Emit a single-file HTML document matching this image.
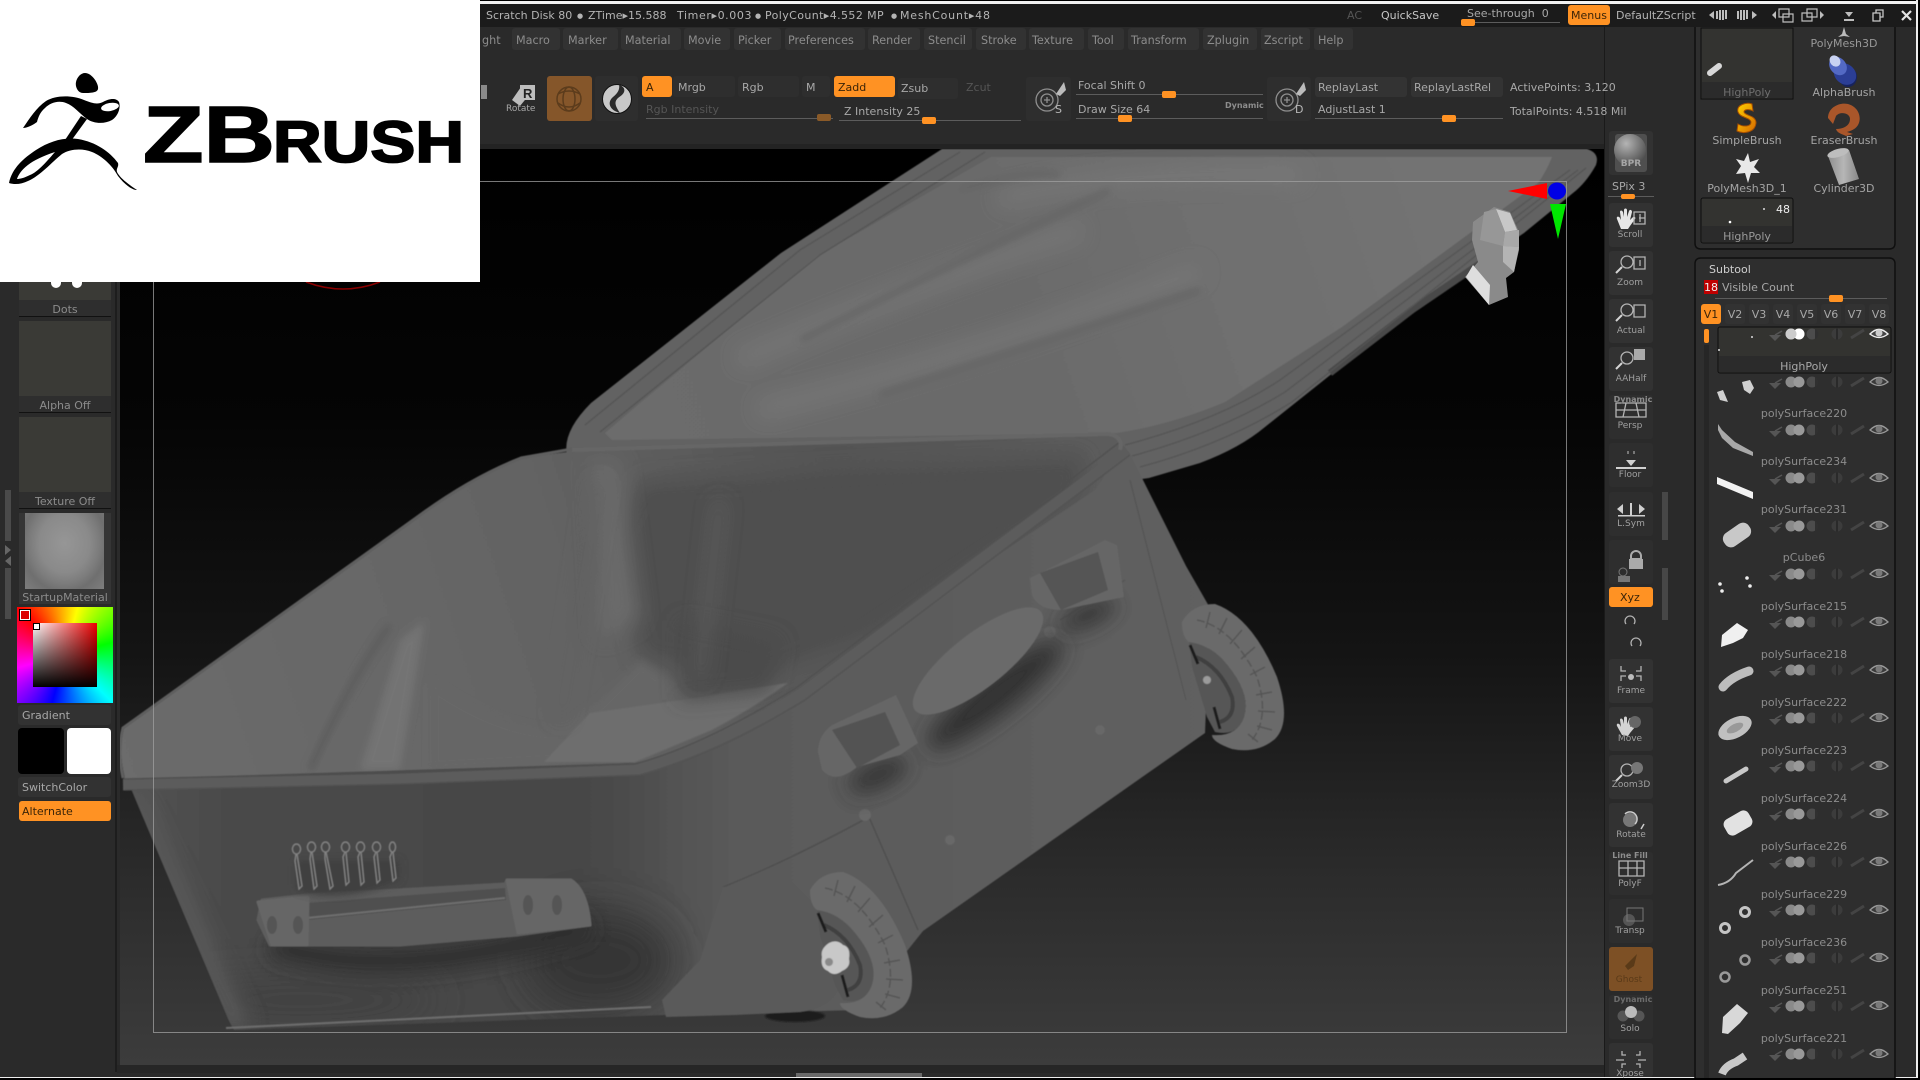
<!DOCTYPE html>
<html><head><meta charset="utf-8"><title>ZBrush</title>
<style>
html,body{margin:0;padding:0;background:#000;width:1920px;height:1080px;overflow:hidden}
#r{position:relative;width:1920px;height:1080px;overflow:hidden;background:#2a2a2a;font-family:"DejaVu Sans","Liberation Sans",sans-serif}
.a,.t,.b,.c{position:absolute}
.t,.c{white-space:nowrap;font-size:11px;line-height:14px;color:#a8a8a8;margin-top:1px;z-index:3}
.c{transform:translateX(-50%)}
.s{font-size:9px;line-height:11px;color:#a0a0a0}
.m{font-size:11.200px}
.l{font-size:11px!important;line-height:12px!important}
.d{color:#8c8c8c}
.dim{color:#555}
.k{color:#3b2408}
.b{background:#323232;border-radius:3px}
.o{background:#ff9223;border-radius:3px}
.sl{position:absolute;height:1px;background:#5c5c5c}
.th{position:absolute;width:14px;height:7px;background:#ff9223;border-radius:2px}
.dy{font-size:8px;line-height:10px;font-weight:bold;color:#8d8d8d}
.dot{font-size:7px}
svg{position:absolute;left:0;top:0}
</style></head><body><div id="r">

<!-- canvas + model -->
<svg width="1920" height="1080" viewBox="0 0 1920 1080">
<defs>
<linearGradient id="cv" x1="0" y1="149" x2="0" y2="1065" gradientUnits="userSpaceOnUse"><stop offset="0" stop-color="#000"/><stop offset=".3" stop-color="#050505"/><stop offset=".55" stop-color="#141414"/><stop offset=".8" stop-color="#2c2c2c"/><stop offset="1" stop-color="#3c3c3c"/></linearGradient>
<linearGradient id="body" x1="120" y1="0" x2="1210" y2="0" gradientUnits="userSpaceOnUse"><stop offset="0" stop-color="#545454"/><stop offset=".1" stop-color="#4a4a4a"/><stop offset=".42" stop-color="#464646"/><stop offset=".56" stop-color="#5a5a5a"/><stop offset="1" stop-color="#606060"/></linearGradient>
<linearGradient id="inner" x1="120" y1="770" x2="1100" y2="450" gradientUnits="userSpaceOnUse"><stop offset="0" stop-color="#6c6c6c"/><stop offset=".45" stop-color="#646464"/><stop offset=".75" stop-color="#545454"/><stop offset="1" stop-color="#5c5c5c"/></linearGradient>
<linearGradient id="lidg" x1="600" y1="430" x2="1400" y2="160" gradientUnits="userSpaceOnUse"><stop offset="0" stop-color="#6c6c6c"/><stop offset=".5" stop-color="#6b6b6b"/><stop offset="1" stop-color="#737373"/></linearGradient>
<filter id="f1" filterUnits="userSpaceOnUse" x="0" y="0" width="1920" height="1080"><feGaussianBlur stdDeviation=".6"/></filter>
<filter id="f4" filterUnits="userSpaceOnUse" x="0" y="0" width="1920" height="1080"><feGaussianBlur stdDeviation="4"/></filter>
<filter id="f10" filterUnits="userSpaceOnUse" x="0" y="0" width="1920" height="1080"><feGaussianBlur stdDeviation="10"/></filter>
<filter id="f20" filterUnits="userSpaceOnUse" x="0" y="0" width="1920" height="1080"><feGaussianBlur stdDeviation="20"/></filter>
<clipPath id="cc"><rect x="120" y="149" width="1484" height="916"/></clipPath>
<clipPath id="ci"><path d="M575 451Q800 442 1100 434Q1122 436 1118 450Q1108 472 1095 490L800 688Q720 745 635 763L125 779Q118 750 123 728L416 518Q470 478 521 458Z"/></clipPath>
<clipPath id="cb"><path d="M123 777L635 763 1121 445 1129 452 1186 566 1210 608 1205 733 923 931 860 1010 665 1015 234 1030 229 1021 129 784Z"/></clipPath>
<g id="wh">
<path d="M817 910Q835 912 850 927Q880 960 872 985Q865 1005 843 1000L835 985 820 935Z" fill="#575757"/>
<path d="M824 925Q848 935 860 965Q864 985 848 990" fill="none" stroke="#3f3f3f" stroke-width="4"/>
<path d="M818 913L826 932M842 975L848 997" stroke="#1d1d1d" stroke-width="3"/>
<path d="M810 890Q820 872 843 872Q880 885 905 945Q920 990 903 1007Q885 1022 860 1017Q840 1010 840 1003Q865 1005 872 985Q880 960 850 927Q835 912 817 910Q810 905 810 890Z" fill="#6b6b6b"/>
<path d="M825 888Q860 895 885 945Q898 985 880 1008" fill="none" stroke="#555" stroke-width="1.500" stroke-dasharray="8 3"/>
<path d="M838 880l-4 16M855 886l-8 16M870 898l-12 14M883 915l-14 12M893 935l-15 8M900 960l-16 3M903 980l-17-1M900 998l-15-4M886 1010l-10-8" stroke="#545454" stroke-width="1.500"/>
</g>
</defs>
<g clip-path="url(#cc)">
<rect x="120" y="149" width="1484" height="916" fill="url(#cv)"/>
<path d="M306 282Q343 296 380 282" fill="none" stroke="#8a0000" stroke-width="1.500"/>
<g filter="url(#f1)">
<!-- lid -->
<path d="M942 149L1587 149Q1600 153 1596 165Q1586 183 1573 193L1524 233 1412 310 1265 427Q1240 448 1200 463L1149 478 1135 480 1121 455 600 458 567 455Q562 432 591 403L781 253Z" fill="#626262"/>
<path d="M1500 250L1412 310 1330 373" fill="none" stroke="#494949" stroke-width="7"/>
<path d="M991 157L1552 157Q1546 172 1538 183L1342 327 1225 402Q1170 425 1117 433L612 440 605 433 640 403 816 257Z" fill="url(#lidg)"/>
<g filter="url(#f10)" fill="none" stroke="#787878" stroke-width="14">
<path d="M740 360Q900 290 1080 230"/><path d="M760 410Q960 360 1200 270"/><path d="M1000 200Q1100 170 1300 175"/>
</g>
<g filter="url(#f4)" fill="none" stroke="#5f5f5f" stroke-width="4">
<path d="M800 340Q960 260 1110 190"/><path d="M880 395Q1050 340 1200 290"/><path d="M960 190Q1020 170 1060 175"/>
</g>
<g fill="none" stroke="#555" stroke-width="1.300">
<path d="M1125 445Q1220 420 1280 380L1570 170"/><path d="M1132 456Q1220 432 1285 392L1578 170"/><path d="M1140 467Q1225 444 1292 402L1586 168"/>
<path d="M585 425L800 250 960 152"/><path d="M600 432L820 255 985 152"/>
</g>
<!-- box body -->
<path d="M123 777L635 763 1121 445 1129 452 1186 566 1210 608 1205 733 923 931 860 1010 665 1015 234 1030 229 1021 129 784Z" fill="url(#body)"/>
<g clip-path="url(#cb)">
<ellipse cx="600" cy="960" rx="75" ry="50" fill="#363636" filter="url(#f20)"/>
<ellipse cx="300" cy="1000" rx="140" ry="20" fill="#404040" filter="url(#f20)"/>
<path d="M130 800L240 1030" stroke="#585858" stroke-width="24" filter="url(#f10)"/>
</g>
<!-- interior -->
<path d="M575 451Q800 442 1100 434Q1122 436 1118 450Q1108 472 1095 490L800 688Q720 745 635 763L125 779Q118 750 123 728L416 518Q470 478 521 458Z" fill="url(#inner)"/>
<g clip-path="url(#ci)">
<path d="M640 480L1085 455 1080 495 860 640 760 680 640 660 610 540Z" fill="#4f4f4f" filter="url(#f10)"/>
<path d="M590 460L620 460 640 620 600 640Z" fill="#6a6a6a" filter="url(#f10)"/>
<path d="M400 640L425 620 400 770 360 770Z" fill="#737373" filter="url(#f4)"/>
<path d="M310 770Q350 680 390 625" stroke="#5c5c5c" stroke-width="6" fill="none" filter="url(#f4)"/>
<path d="M430 680Q500 730 560 730L600 700 640 660 700 700 620 760 430 770Z" fill="#666" filter="url(#f4)"/>
<path d="M544 762L590 713 681 700Q740 690 788 683Q750 710 712 730L635 762Z" fill="#6e6e6e" filter="url(#f1)"/>
<path d="M680 620L780 640 770 690 680 700Z" fill="#4c4c4c" filter="url(#f10)"/>
<path d="M600 480L560 720M720 500L700 680" stroke="#5e5e5e" stroke-width="8" filter="url(#f10)"/>
</g>
<path d="M123 785L400 779 635 770Q710 750 800 695L1127 450" fill="none" stroke="#5b5b5b" stroke-width="11"/>
<path d="M123 779L400 772 635 764Q705 745 796 688L1120 442" fill="none" stroke="#505050" stroke-width="1.300"/>
<path d="M125 790L400 784 640 775Q712 757 805 700L1130 455" fill="none" stroke="#525252" stroke-width="1.300"/>
<path d="M572 450L1108 434Q1124 436 1120 450" fill="none" stroke="#666" stroke-width="4"/>
<path d="M572 449L521 458Q470 478 416 518L123 728Q117 752 123 778" fill="none" stroke="#5e5e5e" stroke-width="3"/>
<path d="M226 1028L651 1007" stroke="#6d6d6d" stroke-width="2"/>
<!-- panel seams -->
<path d="M869 817L918 930M723 887Q790 860 869 817" fill="none" stroke="#4e4e4e" stroke-width="1.300"/>
<path d="M1130 480L1186 700M1125 580L1060 620" fill="none" stroke="#555" stroke-width="1.300"/>
<g fill="#676767"><circle cx="1100" cy="730" r="5"/><circle cx="950" cy="840" r="5"/><circle cx="738" cy="895" r="6"/><circle cx="865" cy="815" r="6"/><circle cx="1050" cy="632" r="6"/></g>
<!-- top handle -->
<ellipse cx="995" cy="695" rx="85" ry="20" fill="#303030" transform="rotate(-38 995 695)" filter="url(#f10)"/>
<ellipse cx="878" cy="775" rx="32" ry="12" fill="#333" filter="url(#f10)" transform="rotate(-25 878 775)"/>
<ellipse cx="1088" cy="615" rx="30" ry="10" fill="#333" filter="url(#f10)" transform="rotate(-25 1088 615)"/>
<ellipse cx="978" cy="661" rx="80" ry="27" fill="#6a6a6a" transform="rotate(-38 978 661)"/>
<path d="M818 752Q818 735 832 725L896 695 918 743 900 755 857 767Q835 785 822 770Z" fill="#666"/><path d="M832 730L885 712 900 745 857 768Z" fill="#535353"/>
<path d="M1030 578L1105 540 1117 545 1124 597 1061 610Q1038 610 1032 595Z" fill="#666"/><path d="M1040 573L1098 552 1108 590 1061 610Z" fill="#555"/>
<!-- front handle -->
<path d="M270 945Q400 985 590 925" fill="none" stroke="#2e2e2e" stroke-width="24" filter="url(#f10)"/>
<path d="M262 900L307 895 505 884 507 880 570 880Q586 890 590 925L517 935 400 945 306 945 270 945 258 920Z" fill="#5d5d5d" stroke="#5d5d5d" stroke-width="3" stroke-linejoin="round"/>
<path d="M307 903L505 888 506 900 307 920Z" fill="#505050"/>
<path d="M307 918L505 898" stroke="#6e6e6e" stroke-width="2"/>
<path d="M507 880L571 880Q587 890 590 925L518 933Z" fill="#666" stroke="#666" stroke-width="3" stroke-linejoin="round"/><path d="M258 902L308 897 307 945 272 945Z" fill="#666" stroke="#666" stroke-width="3" stroke-linejoin="round"/>
<g fill="#555"><ellipse cx="272" cy="925" rx="5" ry="9"/><ellipse cx="298" cy="925" rx="5" ry="9"/><ellipse cx="528" cy="905" rx="5" ry="10"/><ellipse cx="557" cy="905" rx="5" ry="10"/></g>
<path d="M295 890Q340 905 400 880V860L295 860Z" fill="#3f3f3f" filter="url(#f4)"/>
<g fill="none" stroke="#838383" stroke-width="1.300">
<path d="M296 854a4 5 0 1 1 1 0l5 32-3 3-4-28zM311 852a4 5 0 1 1 1 0l5 34-3 3-4-30zM325 852a4 5 0 1 1 1 0l7 34-3 3-5-30zM345 852a4 5 0 1 1 1 0l3 30-3 3-3-28zM360 852a4 5 0 1 1 1 0l3 30-3 3-3-28zM376 852a4 5 0 1 1 1 0l3 28-3 3-3-26zM392 852a3 5 0 1 1 1 0l3 26-3 3-3-24z"/>
</g>
<!-- upper wheel -->
<use href="#wh" transform="translate(372 -268)"/>
<circle cx="1207" cy="680" r="4" fill="#b8b8b8" opacity=".7"/>
<!-- lower corner + wheel -->
<ellipse cx="795" cy="1016" rx="30" ry="6" fill="#1f1f1f" filter="url(#f1)"/>
<path d="M662 1000L666 1017 735 1015 800 1012Q830 1008 838 990L826 945 815 905 790 880 723 887 700 960Z" fill="#5a5a5a"/>
<use href="#wh"/>
<path d="M829 943q8-4 14 2q8 2 6 14q2 8-7 12q-8 6-14 0q-8-3-6-14q-2-8 7-14z" fill="#c8c8c8"/><circle cx="829" cy="962" r="4" fill="#8a8a8a"/>
</g>
<!-- doc frame -->
<rect x="153.500" y="181.500" width="1413" height="851" fill="none" stroke="#a0a0a0" stroke-opacity=".75"/>
<!-- head -->
<path d="M1494 207L1510 212 1519 232 1519 250 1514 272 1506 278 1508 297 1489 305 1465 277 1478 262 1472 240 1473 222Z" fill="#8a8a8a"/>
<path d="M1496 209L1510 213 1517 230 1505 232Z" fill="#c8c8c8"/><path d="M1505 232L1519 230 1519 247 1503 246Z" fill="#a8a8a8"/><path d="M1503 246L1519 247 1514 272 1503 262Z" fill="#b4b4b4"/>
<path d="M1484 212L1496 209 1505 232 1503 246 1480 240Z" fill="#979797"/>
<path d="M1466 277L1489 305 1490 285 1473 265Z" fill="#dedede"/>
<!-- gizmo -->
<path d="M1508 191L1547 183 1547 199Z" fill="#f00"/>
<ellipse cx="1557" cy="191" rx="9" ry="8.500" fill="#0000e6"/>
<path d="M1550 204L1566 204 1558 239Z" fill="#00e600"/>
</g>
</svg>

<!-- dock frames -->
<div class="a" style="left:115px;top:282px;width:2px;height:790px;background:#1d1d1d"></div>
<div class="a" style="left:117px;top:1065px;width:1487px;height:8px;background:#262626"></div>
<div class="a" style="left:0;top:1073px;width:1916px;height:4px;background:#2a2a2a"></div>
<div class="a" style="left:796px;top:1073px;width:126px;height:4px;background:#6a6a6a"></div>
<div class="a" style="left:0;top:1077px;width:1918px;height:1px;background:#eee"></div>
<div class="a" style="left:0;top:1078px;width:1920px;height:2px;background:#000"></div>

<!-- top bars -->
<div class="a" style="left:480px;top:0;width:1440px;height:1px;background:#000"></div>
<div class="a" style="left:480px;top:1px;width:1438px;height:3px;background:#f2f2f2"></div>
<div class="a" style="left:480px;top:4px;width:1436px;height:23px;background:#1b1b1b"></div>
<div class="a" style="left:480px;top:27px;width:1124px;height:117px;background:#2a2a2a"></div>
<div class="a" style="left:480px;top:144px;width:1124px;height:5px;background:#232323"></div>
<div class="a" style="left:1604px;top:27px;width:312px;height:1050px;background:#2a2a2a;border-left:1px solid #1a1a1a;box-sizing:border-box"></div>
<div class="a" style="left:1916px;top:0;width:2px;height:1078px;background:#eee"></div>
<div class="a" style="left:1918px;top:0;width:2px;height:1080px;background:#000"></div>

<div class="t" style="left:486px;top:8px;color:#b4b4b4">Scratch Disk 80</div>
<div class="t dot" style="left:577px;top:8px;color:#b4b4b4">●</div>
<div class="t" style="left:588px;top:8px;color:#b4b4b4">ZTime▸15.588</div>
<div class="t" style="left:677px;top:8px;color:#b4b4b4;letter-spacing:.6px">Timer▸0.003</div>
<div class="t dot" style="left:755px;top:8px;color:#b4b4b4">●</div>
<div class="t" style="left:765px;top:8px;color:#b4b4b4;letter-spacing:.4px">PolyCount▸4.552 MP</div>
<div class="t dot" style="left:891px;top:8px;color:#b4b4b4">●</div>
<div class="t" style="left:900px;top:8px;color:#b4b4b4;letter-spacing:.8px">MeshCount▸48</div>
<div class="t dim" style="left:1347px;top:8px">AC</div>
<div class="t" style="left:1381px;top:8px;color:#c8c8c8">QuickSave</div>
<div class="t" style="left:1467px;top:6px">See-through&nbsp;&nbsp;0</div>
<div class="sl" style="left:1462px;top:22px;width:98px"></div><div class="th" style="left:1461px;top:19px"></div>
<div class="a o" style="left:1568px;top:5px;width:42px;height:20px"></div>
<div class="t k" style="left:1571px;top:8px">Menus</div>
<div class="t" style="left:1616px;top:8px;color:#b4b4b4">DefaultZScript</div>
<svg width="1920" height="30" viewBox="0 0 1920 30" fill="#bdbdbd">
<path d="M1709 15l5-4v8zM1716 11h2v8h-2zM1719 10h2v10h-2zM1722 10h2v10h-2zM1725 10h2v9h-2zM1737 11h2v8h-2zM1740 10h2v10h-2zM1743 10h2v10h-2zM1746 10h2v9h-2zM1752 11l5 4-5 4zM1772 15l4-4v8z"/>
<g fill="none" stroke="#bdbdbd" stroke-width="1.200"><path d="M1779 9h10v8h-10zM1783 14h10v8h-10zM1802 13h10v8h-10zM1807 9h10v8h-10z"/></g>
<path d="M1820 11l4 4-4 4zM1845 12h8l-4 5zM1844 19h10v2h-10z"/>
<g fill="none" stroke="#c8c8c8" stroke-width="1.300"><path d="M1873 13h7v8h-7zM1876 13v-3h7v7h-3"/></g>
<path d="M1902 11l9 9M1911 11l-9 9" stroke="#e4e4e4" stroke-width="2.200" fill="none"/>
</svg>

<!-- menu row -->
<div class="b" style="left:512px;top:28px;width:48px;height:22px"></div><div class="b" style="left:563px;top:28px;width:55px;height:22px"></div><div class="b" style="left:621px;top:28px;width:60px;height:22px"></div><div class="b" style="left:684px;top:28px;width:46px;height:22px"></div><div class="b" style="left:734px;top:28px;width:47px;height:22px"></div><div class="b" style="left:785px;top:28px;width:80px;height:22px"></div><div class="b" style="left:868px;top:28px;width:52px;height:22px"></div><div class="b" style="left:924px;top:28px;width:48px;height:22px"></div><div class="b" style="left:976px;top:28px;width:50px;height:22px"></div><div class="b" style="left:1029px;top:28px;width:55px;height:22px"></div><div class="b" style="left:1088px;top:28px;width:36px;height:22px"></div><div class="b" style="left:1128px;top:28px;width:71px;height:22px"></div><div class="b" style="left:1203px;top:28px;width:54px;height:22px"></div><div class="b" style="left:1261px;top:28px;width:49px;height:22px"></div><div class="b" style="left:1314px;top:28px;width:39px;height:22px"></div>
<div class="t d m" style="left:482px;top:33px">ght</div><div class="t d m" style="left:516px;top:33px">Macro</div><div class="t d m" style="left:568px;top:33px">Marker</div><div class="t d m" style="left:625px;top:33px">Material</div><div class="t d m" style="left:688px;top:33px">Movie</div><div class="t d m" style="left:738px;top:33px">Picker</div><div class="t d m" style="left:788px;top:33px">Preferences</div><div class="t d m" style="left:872px;top:33px">Render</div><div class="t d m" style="left:928px;top:33px">Stencil</div><div class="t d m" style="left:981px;top:33px">Stroke</div><div class="t d m" style="left:1032px;top:33px">Texture</div><div class="t d m" style="left:1092px;top:33px">Tool</div><div class="t d m" style="left:1131px;top:33px">Transform</div><div class="t d m" style="left:1207px;top:33px">Zplugin</div><div class="t d m" style="left:1264px;top:33px">Zscript</div><div class="t d m" style="left:1318px;top:33px">Help</div>

<!-- toolbar -->
<div class="t s" style="left:506px;top:103px;color:#a8a8a8">Rotate</div>
<div class="a" style="left:481px;top:85px;width:6px;height:14px;background:#8a8a8a"></div>
<div class="b" style="left:547px;top:76px;width:45px;height:45px;background:#85562a"></div>
<div class="b" style="left:595px;top:76px;width:43px;height:45px;background:#2e2e2e"></div>
<div class="a o" style="left:642px;top:76px;width:30px;height:21px"></div><div class="t k" style="left:646px;top:80px">A</div>
<div class="b" style="left:673px;top:76px;width:62px;height:21px;background:#2e2e2e"></div><div class="b" style="left:738px;top:76px;width:61px;height:21px;background:#2e2e2e"></div><div class="b" style="left:802px;top:76px;width:28px;height:21px;background:#2e2e2e"></div>
<div class="t" style="left:678px;top:80px">Mrgb</div><div class="t" style="left:742px;top:80px">Rgb</div><div class="t" style="left:806px;top:80px">M</div>
<div class="a o" style="left:834px;top:76px;width:61px;height:21px"></div><div class="t k" style="left:838px;top:80px">Zadd</div>
<div class="b" style="left:898px;top:78px;width:60px;height:21px;background:#2e2e2e"></div><div class="t" style="left:901px;top:81px">Zsub</div>
<div class="t dim" style="left:966px;top:80px">Zcut</div>
<div class="t dim" style="left:646px;top:102px">Rgb Intensity</div>
<div class="sl" style="left:646px;top:118px;width:187px"></div><div class="th" style="left:817px;top:114px;background:#8a5a28"></div>
<div class="t" style="left:844px;top:104px">Z Intensity 25</div>
<div class="sl" style="left:839px;top:120px;width:182px"></div><div class="th" style="left:922px;top:117px"></div>
<div class="b" style="left:1026px;top:77px;width:45px;height:44px;background:#2e2e2e"></div>
<div class="t" style="left:1078px;top:78px">Focal Shift 0</div>
<div class="sl" style="left:1076px;top:94px;width:187px"></div><div class="th" style="left:1162px;top:91px"></div>
<div class="t" style="left:1078px;top:102px">Draw Size 64</div>
<div class="sl" style="left:1076px;top:118px;width:187px"></div><div class="th" style="left:1118px;top:115px"></div>
<div class="t dy" style="left:1225px;top:100px">Dynamic</div>
<div class="b" style="left:1267px;top:77px;width:44px;height:44px;background:#2e2e2e"></div>
<div class="b" style="left:1315px;top:77px;width:92px;height:20px;background:#333"></div><div class="b" style="left:1411px;top:77px;width:92px;height:20px;background:#333"></div>
<div class="t" style="left:1318px;top:80px">ReplayLast</div><div class="t" style="left:1414px;top:80px">ReplayLastRel</div>
<div class="t" style="left:1318px;top:102px">AdjustLast 1</div>
<div class="sl" style="left:1315px;top:118px;width:188px"></div><div class="th" style="left:1442px;top:115px"></div>
<div class="t" style="left:1510px;top:80px">ActivePoints: 3,120</div>
<div class="t" style="left:1510px;top:104px">TotalPoints: 4.518 Mil</div>
<svg width="1920" height="130" viewBox="0 0 1920 130">
<path d="M512 100l9-13 8 8-9 11zM520 85h15v15h-15z" fill="#bdbdbd"/><text x="523" y="98" font-family="Liberation Sans" font-size="13" font-weight="bold" fill="#222">R</text>
<g fill="none" stroke="#5c3c1c" stroke-width="1.500"><circle cx="569" cy="99" r="12"/><ellipse cx="569" cy="99" rx="6" ry="12"/><path d="M558 103q11 8 22 0M558 94q11-6 22 0"/></g>
<circle cx="617" cy="99" r="14.500" fill="#c8c8c8" stroke="#111" stroke-width="1"/><path d="M617 84.500c7 3 7 8 1 12-6 4-6 8 0 16.500 -11-3-13-11-7-16 5-4 7-8 6-12.500z" fill="#2a2a2a" transform="translate(2 0)"/>
<g fill="none" stroke="#8f8f8f" stroke-width="1.300"><circle cx="1047" cy="100" r="11"/><circle cx="1047" cy="100" r="6"/><path d="M1047 97v6M1044 100h6"/><circle cx="1287" cy="100" r="11"/><circle cx="1287" cy="100" r="6"/><path d="M1287 97v6M1284 100h6"/></g>
<path d="M1056 94l8-12 2 8-6 6zM1296 94l8-12 2 8-6 6z" fill="#bbb"/>
<text x="1055" y="113" font-family="DejaVu Sans" font-size="11" fill="#b8b8b8">S</text><text x="1295" y="113" font-family="DejaVu Sans" font-size="11" fill="#b8b8b8">D</text>
</svg>

<!-- logo -->
<div class="a" style="left:0;top:0;width:480px;height:282px;background:#fff"></div>
<svg width="480" height="282" viewBox="0 0 480 282">
<path d="M85 73C92 73 99 84 98 89 97 93 90 93 83 93 78 93 75 87 76 82 77 77 81 73 85 73Z"/>
<path d="M23 128C30 118 36 108 46 101 56 95 72 95 84 100 92 103 97 105 103 102 108 99 116 97 119 102 121 108 118 116 112 120 105 124 94 124 87 119 79 113 74 106 66 103 58 100 50 103 45 108 40 112 38 118 37 122 33 125 27 128 23 128Z"/>
<ellipse cx="110" cy="107" rx="9" ry="4" fill="#fff" transform="rotate(-10 110 107)"/>
<path d="M81 116L87 119 71 141 65 140Z"/>
<path d="M137 190C128 184 120 178 117 172 116 168 119 167 118 163 110 152 96 142 78 139 64 137 50 141 36 150 24 158 12 168 9 183 15 185 22 184 28 181 40 176 52 162 62 154 70 149 82 148 92 152 102 156 112 165 118 176 124 184 132 190 137 190Z"/>
<path d="M17 179C20 170 30 160 55 152 48 160 38 172 30 175 24 178 20 179 17 179Z" fill="#fff"/>
<text x="143" y="162" font-family="Liberation Sans" font-size="80" font-weight="bold" stroke="#000" stroke-width="1.500" textLength="132" lengthAdjust="spacingAndGlyphs">ZB</text>
<text x="273" y="162" font-family="Liberation Sans" font-size="58" font-weight="bold" stroke="#000" stroke-width="1.800" textLength="191" lengthAdjust="spacingAndGlyphs">RUSH</text>
</svg>

<!-- left dock -->
<div class="a" style="left:5px;top:490px;width:6px;height:51px;background:#4a4a4a"></div>
<div class="a" style="left:5px;top:568px;width:6px;height:51px;background:#4a4a4a"></div>
<svg width="20" height="600" viewBox="0 0 20 600"><path d="M5 545l6 5-6 5zM11 556l-6 5 6 5z" fill="#666"/></svg>
<div class="a" style="left:19px;top:282px;width:92px;height:34px;background:#3a3a36;border-bottom:1px solid #111"></div>
<div class="a" style="left:19px;top:300px;width:92px;height:16px;background:#2e2e2e"></div>
<div class="a" style="left:51px;top:282px;width:10px;height:6px;background:#fff;border-radius:0 0 5px 5px"></div><div class="a" style="left:72px;top:282px;width:10px;height:6px;background:#fff;border-radius:0 0 5px 5px"></div>
<div class="c d l" style="left:65px;top:303px">Dots</div>
<div class="a" style="left:19px;top:321px;width:92px;height:92px;background:#3a3a36;border-bottom:1px solid #111;box-sizing:border-box"></div>
<div class="a" style="left:19px;top:396px;width:92px;height:16px;background:#2e2e2e"></div>
<div class="c d l" style="left:65px;top:399px">Alpha Off</div>
<div class="a" style="left:19px;top:417px;width:92px;height:92px;background:#3a3a36;border-bottom:1px solid #111;box-sizing:border-box"></div>
<div class="a" style="left:19px;top:492px;width:92px;height:16px;background:#2e2e2e"></div>
<div class="c d l" style="left:65px;top:495px">Texture Off</div>
<div class="a" style="left:19px;top:513px;width:92px;height:91px;background:#353535"></div>
<div class="a" style="left:25px;top:513px;width:79px;height:76px;background:radial-gradient(ellipse at 50% 40%,#969696 0,#8a8a8a 45%,#7c7c7c 62%,#6f6f6f 75%,#7e7e7e 100%)"></div>
<div class="c d l" style="left:65px;top:591px">StartupMaterial</div>
<div class="a" style="left:17px;top:607px;width:96px;height:96px;background:conic-gradient(from -45deg,#f00,#ff0 60deg,#0f0 120deg,#0ff 180deg,#00f 240deg,#f0f 300deg,#f00)"></div>
<div class="a" style="left:33px;top:623px;width:64px;height:64px;background:linear-gradient(to bottom,rgba(0,0,0,0),#000),linear-gradient(to right,#fff,#e00)"></div>
<div class="a" style="left:20px;top:610px;width:8px;height:8px;background:#d00;border:1px solid #fff;outline:1px solid #000"></div>
<div class="a" style="left:33px;top:623px;width:5px;height:5px;background:#fff;border:1px solid #000"></div>
<div class="b" style="left:18px;top:705px;width:93px;height:20px"></div><div class="t" style="left:22px;top:708px">Gradient</div>
<div class="a" style="left:18px;top:728px;width:46px;height:46px;background:#000;border-radius:4px"></div>
<div class="a" style="left:67px;top:728px;width:44px;height:46px;background:#fff;border-radius:4px"></div>
<div class="b" style="left:18px;top:777px;width:93px;height:20px"></div><div class="t" style="left:22px;top:780px">SwitchColor</div>
<div class="a o" style="left:19px;top:801px;width:92px;height:20px"></div><div class="t k" style="left:22px;top:804px">Alternate</div>

<!-- right dock -->
<div class="b" style="left:1609px;top:131px;width:44px;height:44px"></div>
<div class="t" style="left:1612px;top:179px">SPix 3</div><div class="sl" style="left:1608px;top:196px;width:46px"></div><div class="th" style="left:1621px;top:194px;height:5px"></div>
<div class="b" style="left:1609px;top:203px;width:44px;height:44px"></div><div class="b" style="left:1609px;top:251px;width:44px;height:44px"></div><div class="b" style="left:1609px;top:299px;width:44px;height:44px"></div><div class="b" style="left:1609px;top:347px;width:44px;height:44px"></div>
<div class="b" style="left:1609px;top:395px;width:44px;height:44px;background:#2e2e2e"></div><div class="b" style="left:1609px;top:443px;width:44px;height:44px;background:#2e2e2e"></div><div class="b" style="left:1609px;top:492px;width:44px;height:44px;background:#2e2e2e"></div><div class="b" style="left:1609px;top:540px;width:44px;height:44px;background:#2e2e2e"></div>
<div class="a o" style="left:1609px;top:587px;width:44px;height:20px"></div>
<div class="t k" style="left:1620px;top:590px">Xyz</div>
<div class="b" style="left:1609px;top:659px;width:44px;height:44px"></div><div class="b" style="left:1609px;top:707px;width:44px;height:44px"></div><div class="b" style="left:1609px;top:755px;width:44px;height:44px"></div><div class="b" style="left:1609px;top:803px;width:44px;height:44px"></div>
<div class="b" style="left:1609px;top:852px;width:44px;height:43px;background:#2e2e2e"></div><div class="b" style="left:1609px;top:899px;width:44px;height:44px;background:#2e2e2e"></div>
<div class="b" style="left:1609px;top:947px;width:44px;height:44px;background:#7d5025"></div>
<div class="b" style="left:1609px;top:995px;width:44px;height:44px;background:#2e2e2e"></div><div class="b" style="left:1609px;top:1043px;width:44px;height:34px"></div>
<div class="c s" style="left:1631px;top:158px;font-weight:bold;font-size:9px;color:#a6a6a6">BPR</div>
<div class="c s" style="left:1630px;top:229px">Scroll</div><div class="c s" style="left:1630px;top:277px">Zoom</div><div class="c s" style="left:1631px;top:325px">Actual</div><div class="c s" style="left:1631px;top:373px">AAHalf</div>
<div class="c dy" style="left:1633px;top:394px">Dynamic</div><div class="c s" style="left:1630px;top:420px">Persp</div>
<div class="c s" style="left:1630px;top:469px">Floor</div><div class="c s" style="left:1631px;top:518px">L.Sym</div>
<div class="c s" style="left:1631px;top:685px">Frame</div><div class="c s" style="left:1630px;top:733px">Move</div><div class="c s" style="left:1631px;top:779px">Zoom3D</div><div class="c s" style="left:1631px;top:829px">Rotate</div>
<div class="c dy" style="left:1630px;top:850px">Line Fill</div><div class="c s" style="left:1630px;top:878px">PolyF</div>
<div class="c s" style="left:1630px;top:925px">Transp</div><div class="c s" style="left:1629px;top:974px;color:#5a3a18">Ghost</div>
<div class="c dy" style="left:1633px;top:994px;color:#6c6c6c">Dynamic</div><div class="c s" style="left:1630px;top:1023px">Solo</div>
<div class="c s" style="left:1630px;top:1068px">Xpose</div>
<div class="a" style="left:1662px;top:492px;width:6px;height:48px;background:#474747"></div><div class="a" style="left:1662px;top:568px;width:6px;height:52px;background:#474747"></div>

<svg width="1920" height="1080" viewBox="0 0 1920 1080">
<defs>
<radialGradient id="sp" cx=".38" cy=".3" r=".75"><stop offset="0" stop-color="#b4b4b4"/><stop offset="1" stop-color="#4a4a4a"/></radialGradient>
<linearGradient id="cyl" x1="0" x2="1"><stop offset="0" stop-color="#8e8e8e"/><stop offset=".5" stop-color="#b6b6b6"/><stop offset="1" stop-color="#888"/></linearGradient>
<linearGradient id="sb" x1="0" y1="0" x2="1" y2="1"><stop offset="0" stop-color="#ffd000"/><stop offset="1" stop-color="#d76a00"/></linearGradient>
<g id="ri">
<path d="M1769 1h12l-6 6z" fill="#555"/><path d="M1775 1l7-4" stroke="#555" stroke-width="1.500"/>
<circle cx="1791" cy="0" r="5.500" fill="#8a8a8a"/><circle cx="1799" cy="0" r="5.500" fill="#999"/>
<circle cx="1812" cy="0" r="5.500" fill="#4c4c4c"/><path d="M1815 -5a5.500 5.500 0 0 1 0 10z" fill="#303030"/>
<circle cx="1837" cy="0" r="5.500" fill="#3c3c3c"/><path d="M1837 -5.500v11" stroke="#2a2a2a" stroke-width="2"/>
<path d="M1851 4L1864 -4" stroke="#444" stroke-width="3"/>
<path d="M1870 0q9-9 18 0q-9 7-18 0z" fill="#3a3a3a" stroke="#999" stroke-width="1.300"/><circle cx="1879" cy="-1" r="3.500" fill="#7a7a7a"/>
</g>
</defs>
<!-- dock icons -->
<rect x="1615" y="134" width="32" height="38" rx="3" fill="#4f4f4f"/>
<circle cx="1630" cy="150" r="16" fill="url(#sp)"/>
<g fill="#e6e6e6">
<path d="M1621 229l-4-10c-1-3 2-3 3-1l1 2-1-8c0-2 2-2 3 0l1 5 0-7c0-2 3-2 3 0l0 7 2-6c1-2 3-1 3 1l-2 8 3-3c2-1 3 1 2 2l-5 7-2 3z"/>
</g>
<g fill="#d4d4d4"><path d="M1622 735l-5-9c-1-3 2-3 3-1l1 2-1-7c0-2 2-2 3 0l1 4 0-6c0-2 3-2 3 0l0 6 2-5c1-2 3-1 3 1l-2 7 3-2c2-1 3 1 2 2l-5 6-2 3z"/></g>
<g fill="none" stroke="#b4b4b4" stroke-width="1.300">
<path d="M1634 212h11v12h-11zM1639 218h6M1640 214v8"/>
<circle cx="1627" cy="262" r="6"/><path d="M1634 257h11v12h-11zM1640 260v6"/>
<circle cx="1627" cy="310" r="6"/><path d="M1634 305h11v12h-11z"/>
<circle cx="1627" cy="358" r="6"/>
<path d="M1616 403h30v14h-30zM1616 410h30M1626 403l-3 14M1636 403l3 14"/>
<path d="M1621 666v5h5M1641 666v5h-5M1621 681v-5h5M1641 681v-5h-5"/>
<circle cx="1627" cy="770" r="6"/>
<path d="M1619 861h25v15h-25zM1619 868h25M1628 861v15M1637 861v15"/>
<path d="M1626 624a5 5 0 1 1 8 0M1632 646a5 5 0 1 1 8 0"/>
<path d="M1622 1051v4h4M1640 1051v4h-4M1622 1068v-4h4M1640 1068v-4h-4M1616 1060h8M1638 1060h8"/>
</g>
<path d="M1622 267l-6 6M1622 315l-6 6M1622 363l-6 6M1622 775l-6 6" stroke="#d4d4d4" stroke-width="2"/>
<path d="M1634 349h11v11h-11z" fill="#aaa"/>
<path d="M1616 467h30v2h-30zM1626 460h10l-5 6z" fill="#d0d0d0"/><path d="M1627 451h2v3h-2zM1633 451h2v3h-2z" fill="#777"/>
<path d="M1617 509l6-5v10zM1645 509l-6-5v10zM1630 503h2v12h-2zM1618 515h27v1.500h-27z" fill="#d0d0d0"/>
<circle cx="1631" cy="677" r="3" fill="#bbb"/><circle cx="1635" cy="722" r="6" fill="#666"/>
<circle cx="1637" cy="768" r="6" fill="#777"/><circle cx="1630" cy="820" r="7" fill="#777"/>
<path d="M1625 814a7 7 0 1 1 10 10M1644 824l-3 5" fill="none" stroke="#ccc" stroke-width="1.500"/>
<circle cx="1629" cy="920" r="6" fill="#555"/><path d="M1627 908h16v13h-16z" fill="none" stroke="#777"/>
<path d="M1625 966l12-12-3 12-6 4z" fill="#5a3a18"/>
<circle cx="1623" cy="1016" r="5.500" fill="#555"/><circle cx="1639" cy="1016" r="5.500" fill="#555"/><circle cx="1631" cy="1012" r="6" fill="#bbb"/>
<path d="M1631 556a5 5 0 0 1 10 0v3h-10z" fill="none" stroke="#aaa" stroke-width="2"/><path d="M1629 559h14v10h-14z" fill="#aaa"/><circle cx="1623" cy="572" r="4" fill="none" stroke="#777"/><path d="M1618 576h12v6h-12z" fill="#777"/>

<!-- right panels -->
<path d="M1695 27V243q0 6 6 6H1889q6 0 6-6V27" fill="#2e2e2e" stroke="#0f0f0f" stroke-width="1.500"/>
<path d="M1695 1078V264q0-6 6-6H1889q6 0 6 6V1078" fill="#2e2e2e" stroke="#0f0f0f" stroke-width="1.500"/>
<rect x="1701" y="28" width="92" height="71" fill="#333330" stroke="#0e0e0e"/><rect x="1702" y="82" width="90" height="16" fill="#2b2b2b"/>
<path d="M1710 73l9-7" stroke="#d8d8d8" stroke-width="6" stroke-linecap="round"/>
<rect x="1701" y="198" width="92" height="45" rx="2" fill="#333330" stroke="#0e0e0e"/><rect x="1702" y="226" width="90" height="16" fill="#2b2b2b"/>
<circle cx="1764" cy="209" r="1" fill="#ddd"/><circle cx="1730" cy="222" r="1.300" fill="#fff"/>
<path d="M1844 27l-2 7-4 3 6-1 6 1-4-3z" fill="#bbb"/>
<ellipse cx="1848" cy="77" rx="9" ry="10" fill="#17235e"/><ellipse cx="1845" cy="74" rx="12" ry="10" fill="#2b3e96" transform="rotate(40 1845 74)"/><ellipse cx="1838" cy="66" rx="10" ry="8" fill="#5369c4" transform="rotate(50 1838 66)"/><ellipse cx="1835" cy="61" rx="6" ry="5" fill="#c8d2f2" transform="rotate(50 1835 61)"/>
<path d="M1752 104c-6-2-16 1-14 8 2 6 12 5 13 10 0 5-8 5-13 2l-1 7c6 3 18 2 19-8 0-8-11-7-12-11 0-3 6-3 9-1z" fill="url(#sb)" stroke="#a85000" stroke-width="1"/>
<path d="M1828 118c0-11 12-16 20-14 11 3 14 14 10 21-3 5-8 6-11 7l6 2-7 2c-4-2-9-3-10-7 7 0 14-3 14-10 0-6-10-8-14-3l-3 8z" fill="#a9562a"/>
<path d="M1748 153l2 9 9-3-5 8 6 6-9 0-3 10-3-10-9 1 5-8-5-7 8 2z" fill="#e8e8e8"/>
<path d="M1828 156l21-6 10 29-20 6z" fill="url(#cyl)"/><ellipse cx="1838" cy="153" rx="11" ry="4" fill="#bdbdbd" transform="rotate(-16 1838 153)"/>
<rect x="1704" y="329" width="5" height="14" rx="2" fill="#ff9223"/>
<rect x="1704" y="345" width="5" height="733" fill="#262626"/>
<rect x="1718" y="327" width="173" height="46" rx="2" fill="#333330" stroke="#0e0e0e"/><rect x="1719" y="356" width="171" height="16" fill="#2b2b2b"/>
<circle cx="1752" cy="337" r="1" fill="#ddd"/><circle cx="1719" cy="350" r="1" fill="#ddd"/>
<use href="#ri" y="334"/><circle cx="1799" cy="334" r="5.500" fill="#fff"/><circle cx="1791" cy="334" r="5.500" fill="#ccc"/><path d="M1870 334q9-9 18 0q-9 7-18 0z" fill="#444" stroke="#eee" stroke-width="1.300"/><circle cx="1879" cy="333" r="3.500" fill="#ccc"/>
<use href="#ri" y="382"/><use href="#ri" y="430"/><use href="#ri" y="478"/><use href="#ri" y="526"/><use href="#ri" y="574"/><use href="#ri" y="622"/><use href="#ri" y="670"/><use href="#ri" y="718"/><use href="#ri" y="766"/><use href="#ri" y="814"/><use href="#ri" y="862"/><use href="#ri" y="910"/><use href="#ri" y="958"/><use href="#ri" y="1006"/><use href="#ri" y="1054"/>
<!-- subtool thumbs -->
<g fill="#d0d0d0">
<path d="M1742 382l8-2 4 8-4 6-6-4zM1717 392l6-2 5 12-8-2z"/>
<path d="M1718 424l4 6 13 12 18 10v4l-20-8-11-10-4-8z" fill="#a8a8a8"/>
<path d="M1717 477l36 15v7l-36-15z" fill="#f2f2f2"/>
<rect x="1722" y="527" width="30" height="16" rx="7" transform="rotate(-35 1737 535)" fill="#c8c8c8"/>
<circle cx="1720" cy="584" r="1.800" fill="#eee"/><circle cx="1722" cy="591" r="1.800" fill="#eee"/><circle cx="1747" cy="578" r="1.800" fill="#eee"/><circle cx="1750" cy="586" r="1.800" fill="#eee"/>
<path d="M1721 647l1-12 15-12 11 7-5 8-10 5z" fill="#f0f0f0"/>
<path d="M1723 687q8-10 26-16" stroke="#bdbdbd" stroke-width="9" fill="none" stroke-linecap="round"/>
<ellipse cx="1735" cy="728" rx="18" ry="10" transform="rotate(-27 1735 728)" fill="#c0c0c0"/><ellipse cx="1735" cy="728" rx="9" ry="4" transform="rotate(-27 1735 728)" fill="#999"/>
<path d="M1726 781l20-12" stroke="#c8c8c8" stroke-width="5" stroke-linecap="round"/>
<rect x="1724" y="814" width="28" height="18" rx="6" transform="rotate(-30 1738 823)" fill="#e2e2e2"/>
<path d="M1718 885q12-2 18-12l17-13" stroke="#b4b4b4" stroke-width="2" fill="none"/>
</g>
<g fill="none" stroke="#c4c4c4">
<circle cx="1745" cy="912" r="4.500" stroke-width="3"/><circle cx="1725" cy="928" r="4.500" stroke-width="3"/>
<circle cx="1745" cy="960" r="4.500" stroke-width="2.500" stroke="#999"/><circle cx="1725" cy="977" r="4.500" stroke-width="2.500" stroke="#999"/>
</g>
<path d="M1722 1033l1-16 14-13 11 9-8 10-12 11z" fill="#d8d8d8"/>
<path d="M1722 1074q3-8 14-12l9-6" stroke="#c8c8c8" stroke-width="8" fill="none"/>
</svg>

<div class="c" style="left:1844px;top:36px;color:#999">PolyMesh3D</div>
<div class="c" style="left:1747px;top:85px;color:#6e6e6e">HighPoly</div>
<div class="c" style="left:1844px;top:85px;color:#a4a4a4">AlphaBrush</div>
<div class="c" style="left:1747px;top:133px;color:#a4a4a4">SimpleBrush</div>
<div class="c" style="left:1844px;top:133px;color:#a4a4a4">EraserBrush</div>
<div class="c" style="left:1747px;top:181px;color:#a4a4a4">PolyMesh3D_1</div>
<div class="c" style="left:1844px;top:181px;color:#a4a4a4">Cylinder3D</div>
<div class="t" style="left:1776px;top:202px;color:#eee">48</div>
<div class="c" style="left:1747px;top:229px;color:#9a9a9a">HighPoly</div>

<div class="t" style="left:1709px;top:262px;color:#cfcfcf">Subtool</div>
<div class="a" style="left:1704px;top:280px;width:14px;height:14px;background:#c00000"></div>
<div class="t" style="left:1704px;top:280px;color:#eee">18</div>
<div class="t" style="left:1722px;top:280px">Visible Count</div>
<div class="sl" style="left:1715px;top:298px;width:172px"></div><div class="th" style="left:1829px;top:295px"></div>
<div class="a o" style="left:1701px;top:304px;width:20px;height:20px"></div>
<div class="b" style="left:1725px;top:304px;width:20px;height:20px"></div><div class="b" style="left:1749px;top:304px;width:20px;height:20px"></div><div class="b" style="left:1773px;top:304px;width:20px;height:20px"></div><div class="b" style="left:1797px;top:304px;width:20px;height:20px"></div><div class="b" style="left:1821px;top:304px;width:20px;height:20px"></div><div class="b" style="left:1845px;top:304px;width:20px;height:20px"></div><div class="b" style="left:1869px;top:304px;width:20px;height:20px"></div>
<div class="c k" style="left:1711px;top:307px">V1</div><div class="c" style="left:1735px;top:307px">V2</div><div class="c" style="left:1759px;top:307px">V3</div><div class="c" style="left:1783px;top:307px">V4</div><div class="c" style="left:1807px;top:307px">V5</div><div class="c" style="left:1831px;top:307px">V6</div><div class="c" style="left:1855px;top:307px">V7</div><div class="c" style="left:1879px;top:307px">V8</div>
<div class="c" style="left:1804px;top:359px">HighPoly</div>
<div class="c d" style="left:1804px;top:406px">polySurface220</div>
<div class="c d" style="left:1804px;top:454px">polySurface234</div>
<div class="c d" style="left:1804px;top:502px">polySurface231</div>
<div class="c d" style="left:1804px;top:550px">pCube6</div>
<div class="c d" style="left:1804px;top:599px">polySurface215</div>
<div class="c d" style="left:1804px;top:647px">polySurface218</div>
<div class="c d" style="left:1804px;top:695px">polySurface222</div>
<div class="c d" style="left:1804px;top:743px">polySurface223</div>
<div class="c d" style="left:1804px;top:791px">polySurface224</div>
<div class="c d" style="left:1804px;top:839px">polySurface226</div>
<div class="c d" style="left:1804px;top:887px">polySurface229</div>
<div class="c d" style="left:1804px;top:935px">polySurface236</div>
<div class="c d" style="left:1804px;top:983px">polySurface251</div>
<div class="c d" style="left:1804px;top:1031px">polySurface221</div>
</div></body></html>
